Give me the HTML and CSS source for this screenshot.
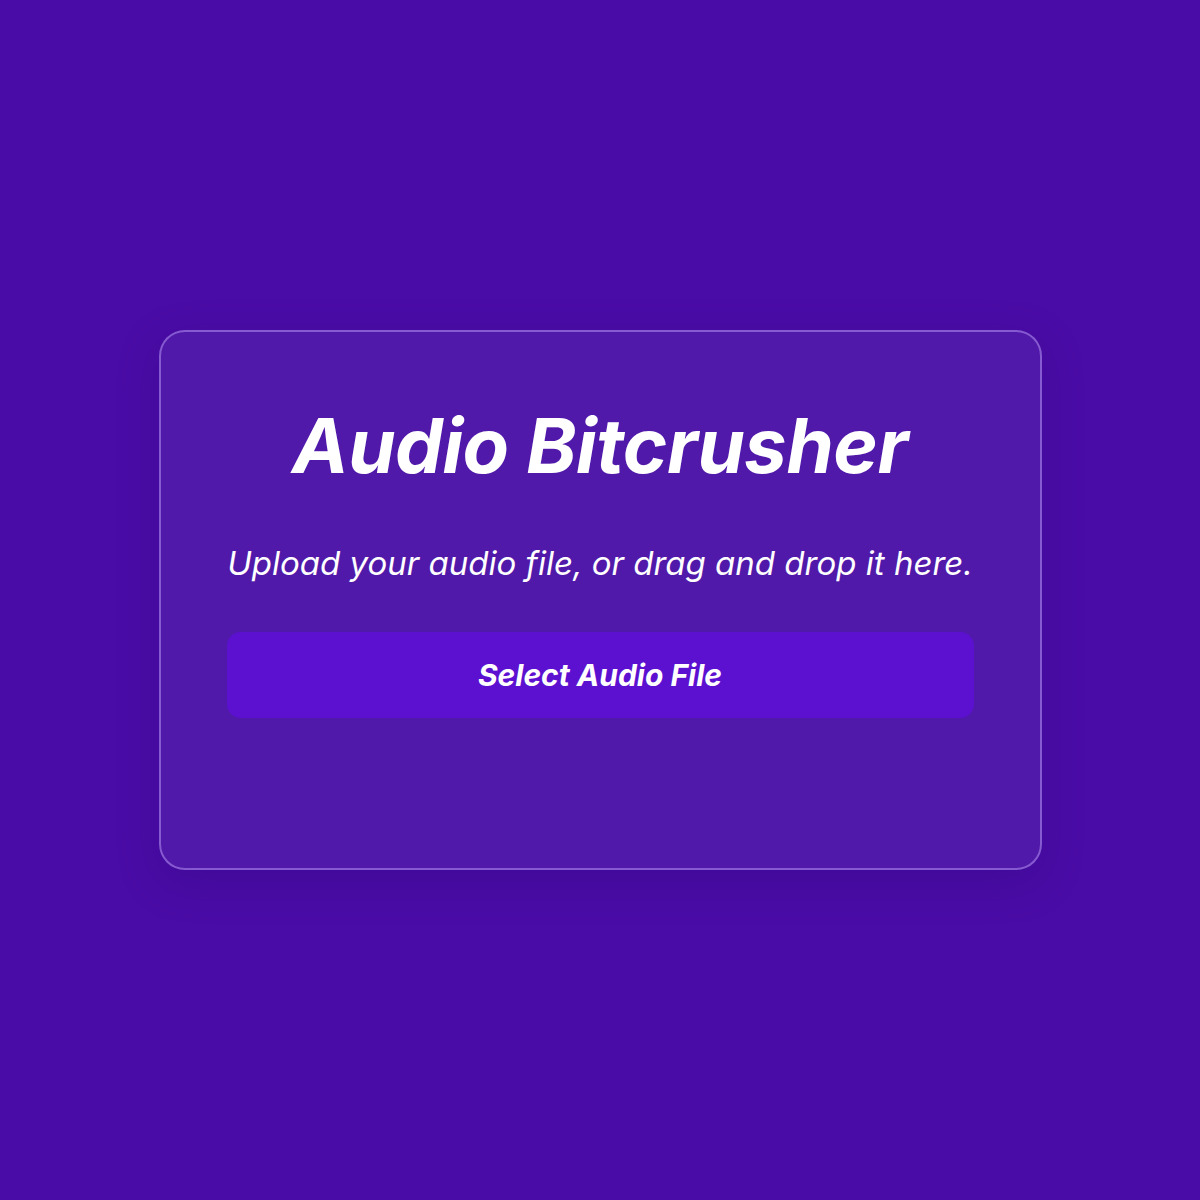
FILE: index.html
```html
<!DOCTYPE html>
<html lang="en">
<head>
<meta charset="utf-8">
<title>Audio Bitcrusher</title>
<link rel="stylesheet" href="styles.css">
</head>
<body>
<main class="page">
  <section class="card">
    <h1 class="title">Audio Bitcrusher</h1>
    <p class="subtitle">Upload your audio file, or drag and drop it here.</p>
    <button class="select-btn" type="button">Select Audio File</button>
    <div class="drop-space"></div>
  </section>
</main>
</body>
</html>
```

FILE: styles.css
```css
* { box-sizing: border-box; }
html, body { margin: 0; padding: 0; }
body {
  background: #4a0ca6;
  font-family: Inter, "Noto Sans", sans-serif;
  font-style: italic;
  color: #ffffff;
}
.page {
  min-height: 1200px;
  display: flex;
  align-items: center;
  justify-content: center;
}
.card {
  width: 883px;
  padding: 64px 66px 0;
  background: #5119aa;
  border: 2px solid rgba(200,170,255,0.45);
  border-radius: 26px;
  box-shadow: 0 12px 40px rgba(40,0,110,0.25);
  display: flex;
  flex-direction: column;
  align-items: center;
}
.title {
  margin: 0;
  font-size: 76px;
  font-weight: 700;
  line-height: 1.3;
  letter-spacing: -0.5px;
}
.subtitle {
  margin: 49px 0 0;
  font-size: 33px;
  font-weight: 400;
  line-height: 1.2;
}
.select-btn {
  margin-top: 48px;
  width: 100%;
  height: 86px;
  border: none;
  border-radius: 14px;
  background: #5c10d0;
  color: #ffffff;
  font-family: inherit;
  font-style: italic;
  font-weight: 700;
  font-size: 30px;
}
.drop-space { height: 150px; }
```
